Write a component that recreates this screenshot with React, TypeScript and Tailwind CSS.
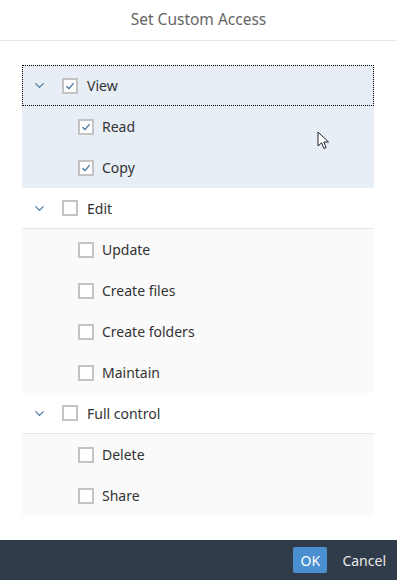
import { ChevronDown } from 'lucide-react';

type Item = { label: string; checked: boolean };
type Group = { label: string; checked: boolean; selected: boolean; children: Item[] };

const groups: Group[] = [
  {
    label: 'View',
    checked: true,
    selected: true,
    children: [
      { label: 'Read', checked: true },
      { label: 'Copy', checked: true },
    ],
  },
  {
    label: 'Edit',
    checked: false,
    selected: false,
    children: [
      { label: 'Update', checked: false },
      { label: 'Create files', checked: false },
      { label: 'Create folders', checked: false },
      { label: 'Maintain', checked: false },
    ],
  },
  {
    label: 'Full control',
    checked: false,
    selected: false,
    children: [
      { label: 'Delete', checked: false },
      { label: 'Share', checked: false },
    ],
  },
];

function Box({ checked }: { checked: boolean }) {
  return (
    <span className="w-[16px] h-[16px] border-2 border-[#c4c4c4] bg-white flex items-center justify-center shrink-0">
      {checked && (
        <svg width="10" height="10" viewBox="0 0 10 10">
          <path d="M1.5 5.2 L4 7.6 L8.6 2.2" fill="none" stroke="#3f6e9c" strokeWidth="1.2" />
        </svg>
      )}
    </span>
  );
}

function App() {
  return (
    <div className="relative w-[397px] h-[580px] flex flex-col bg-white font-['Noto_Sans',sans-serif] overflow-hidden">
      {/* header */}
      <header className="h-[41px] shrink-0 flex items-center justify-center border-b border-[#e8e8e8]">
        <h1 className="text-[15.5px] text-[#666]">Set Custom Access</h1>
      </header>

      {/* list */}
      <main className="flex-1 pt-[24px] px-[22px]">
        <div className="w-[352px]">
          {groups.map((g) => (
            <div key={g.label}>
              <div
                className={
                  'h-[41px] flex items-center ' +
                  (g.selected
                    ? 'bg-[#e8eef6] outline outline-1 outline-dotted outline-black -outline-offset-1'
                    : 'bg-white border-b border-[#e5e5e5]')
                }
              >
                <span className="w-[33px] pl-[10px] flex items-center">
                  <ChevronDown size={15} strokeWidth={1.8} color="#3f6e9c" />
                </span>
                <span className="pl-[7px]">
                  <Box checked={g.checked} />
                </span>
                <span className="pl-[9px] text-[14px] text-[#333]">{g.label}</span>
              </div>
              {g.children.map((c) => (
                <div
                  key={c.label}
                  className={
                    'h-[41px] flex items-center pl-[56px] ' +
                    (g.selected ? 'bg-[#e8eef6]' : 'bg-[#fafafa]')
                  }
                >
                  <Box checked={c.checked} />
                  <span className="pl-[8px] text-[14px] text-[#333]">{c.label}</span>
                </div>
              ))}
            </div>
          ))}
        </div>
      </main>

      {/* footer */}
      <footer className="h-[40px] shrink-0 bg-[#303c49] flex items-center justify-end pr-[11px] gap-[15px]">
        <button className="h-[26px] w-[34px] bg-[#4a8fd0] text-white text-[14px] rounded-[2px]">OK</button>
        <button className="text-[14px] text-[#e8e8e8]">Cancel</button>
      </footer>

      {/* mouse pointer */}
      <svg className="absolute left-[317px] top-[131px]" width="14" height="20" viewBox="0 0 14 20">
        <path
          d="M1 1 L1 15 L4.5 11.8 L7 17.5 L9.2 16.5 L6.8 11 L11.5 11 Z"
          fill="white"
          stroke="#222"
          strokeWidth="1"
          strokeLinejoin="round"
        />
      </svg>
    </div>
  );
}

export default App;
